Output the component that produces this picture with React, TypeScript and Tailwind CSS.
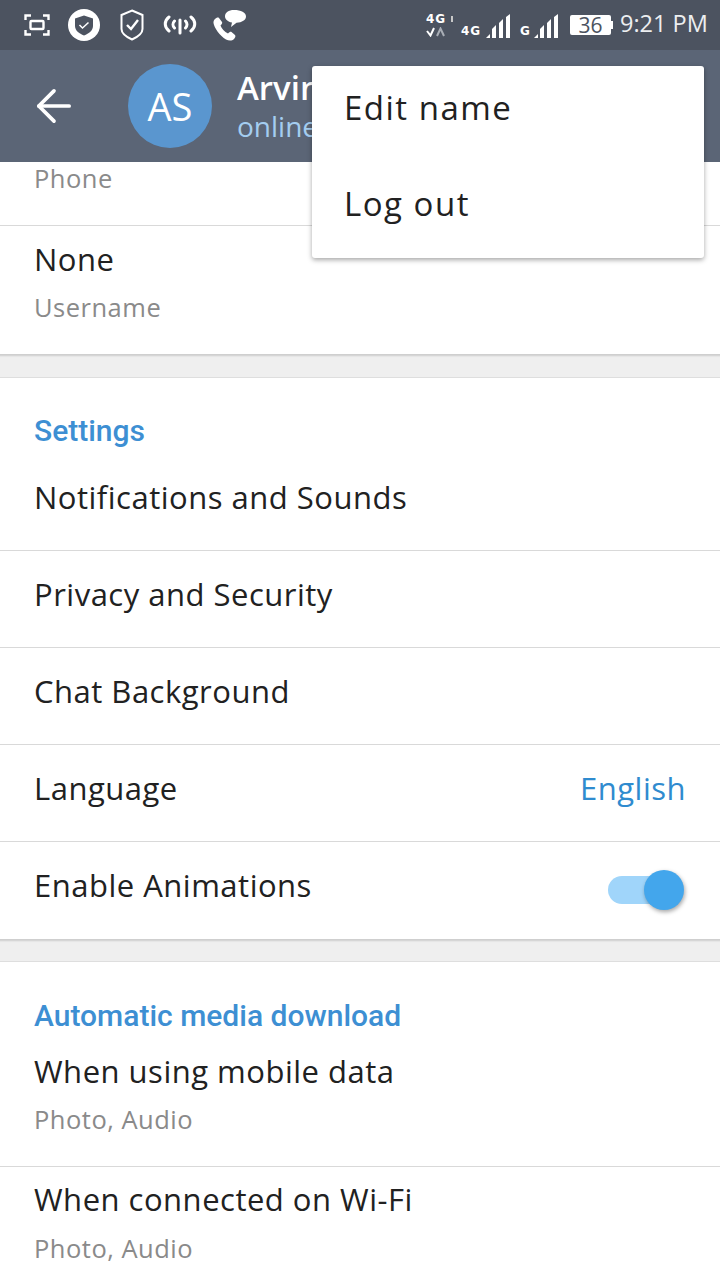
import type { ReactNode } from "react"
import { ArrowLeft } from "lucide-react"

function FocusIcon() {
  return (
    <svg width="26" height="22" viewBox="0 0 26 22" fill="none" stroke="white" strokeWidth="2.4">
      <path d="M1.5 6V1.5H7M19 1.5h5.5V6M24.5 16v4.5H19M7 20.5H1.5V16" />
      <rect x="6.5" y="7" width="13" height="8" rx="1" />
    </svg>
  )
}

function ShieldBadge() {
  return (
    <svg width="32" height="32" viewBox="0 0 32 32">
      <circle cx="16" cy="16" r="16" fill="white" />
      <path d="M16 6.500l9 3v7.500c0 4.500-4 7.500-9 9.500-5-2-9-5-9-9.500V9.500z" fill="#4c5360" />
      <path d="M11.500 16l3 3 6-5.500" fill="none" stroke="white" strokeWidth="1.500" />
    </svg>
  )
}

function ShieldOutline() {
  return (
    <svg width="24" height="32" viewBox="0 0 24 32" fill="none" stroke="white" strokeWidth="2">
      <path d="M12 1.500l10.500 4.500v14c0 4-5 8-10.500 10.500C6.500 28 1.500 24 1.500 20V6z" />
      <path d="M7 16l4 4 7-9" strokeWidth="2.400" />
    </svg>
  )
}

function Antenna() {
  return (
    <svg width="34" height="20" viewBox="0 0 34 20" fill="none" stroke="white" strokeWidth="3" strokeLinecap="round">
      <path d="M6 2c-5 4-5 10 0 14M28 2c5 4 5 10 0 14M11.500 6c-2 2-2 5 0 7M22.500 6c2 2 2 5 0 7M17 5v13" />
    </svg>
  )
}

function CallBubble() {
  return (
    <svg width="33" height="31" viewBox="0 0 33 31" fill="white">
      <path d="M2 9c1-1 3-2 4-1l3 4c.6 1 0 2-1.500 3.500 1 3 4 6.500 7.500 8 1.500-1.500 2.500-2 3.500-1.500l3.500 3c1 1 0 3-1 4-2 2-5 2-8 .5C7 26 1 17.500 .5 13 .3 11.500 1 10 2 9z" />
      <path d="M21 0c7 0 12 2.500 12 6.500 0 3.500-4 6-9.500 6.300L18 17l1-4.600c-4-.7-7-3-7-6C12 2.500 15.500 0 21 0z" />
    </svg>
  )
}

function Bars({ className }: { className: string }) {
  return (
    <svg width="24" height="24" viewBox="0 0 24 24" fill="white" className={className}>
      <path d="M0 24l4-4v4zM6 24v-9l4-4v13zM13 24V9l4-4v19zM20 24V3l4-3v24z" />
    </svg>
  )
}

function DataArrows() {
  return (
    <svg width="19" height="10" viewBox="0 0 19 10" fill="none" strokeWidth="2">
      <path d="M1 4l3.500 4.500L8 1" stroke="white" />
      <path d="M11 9l3.500-7.500L18 9" stroke="#a8adb5" />
    </svg>
  )
}

function Row({ label, right }: { label: string; right?: ReactNode }) {
  return (
    <div className="flex h-[97px] items-start justify-between border-b border-[#d9d9d9] px-[34px] pt-[22px] text-[31px] leading-[42px] tracking-[0.5px] text-[#212121]">
      <span>{label}</span>
      {right}
    </div>
  )
}

export default function App() {
  return (
    <div className="relative h-[1280px] w-[720px] overflow-hidden bg-white font-['Open_Sans',sans-serif]">
      {/* status bar */}
      <div className="flex h-[50px] items-center bg-[#4c5360] pl-6 text-white">
        <FocusIcon />
        <div className="ml-[18px]"><ShieldBadge /></div>
        <div className="ml-5"><ShieldOutline /></div>
        <div className="ml-[19px]"><Antenna /></div>
        <div className="ml-4"><CallBubble /></div>
        <div className="ml-[180px] flex w-[26px] flex-col items-start gap-[2px]">
          <div className="flex items-start gap-[5px]">
            <span className="font-['DejaVu_Sans',sans-serif] text-[12px] font-bold leading-[11px] tracking-[1px]">4G</span>
            <div className="mt-[2px] h-[6px] w-[2px] bg-[#c8c8c8]" />
          </div>
          <DataArrows />
        </div>
        <span className="ml-[9px] mt-[13px] w-[22px] font-['DejaVu_Sans',sans-serif] text-[12px] font-bold leading-[11px] tracking-[1px]">4G</span>
        <Bars className="ml-[3px] mt-[1px]" />
        <span className="ml-[10px] mt-[13px] w-[14px] font-['DejaVu_Sans',sans-serif] text-[12px] font-bold leading-[11px]">G</span>
        <Bars className="mt-[1px]" />
        <div className="ml-3 flex h-5 w-[41px] items-center justify-center rounded-[2px] bg-white text-[21px] leading-5 text-[#4c5360]">36</div>
        <div className="h-[8px] w-[2px] bg-white" />
        <span className="ml-[7px] mb-1 text-[23.5px] leading-8 text-[#eceef0]">9:21 PM</span>
      </div>

      {/* header */}
      <div className="flex h-[112px] items-center bg-[#5b6576] pl-[28px]">
        <ArrowLeft className="h-[52px] w-[52px] text-white" strokeWidth={1.7} />
        <div className="ml-[48px] flex h-[84px] w-[84px] items-center justify-center rounded-full bg-[#5a96cf] text-[38px] text-white">AS</div>
        <div className="ml-[25px] flex flex-col whitespace-nowrap">
          <span className="text-[33px] font-semibold leading-[40px] text-white">Arvind S</span>
          <span className="text-[28px] leading-[36px] text-[#a4cdf0]">online</span>
        </div>
      </div>

      {/* account */}
      <div className="-mt-[1px] border-b border-[#d9d9d9] pb-[30px] pl-[34px] text-[25.500px] leading-[34px] tracking-[0.5px] text-[#8a8a8a]">Phone</div>
      <div className="h-[128px] bg-white pl-[34px] pt-[12px]">
        <div className="text-[31px] leading-[42px] tracking-[0.5px] text-[#212121]">None</div>
        <div className="mt-[10px] text-[25.500px] leading-[34px] tracking-[0.5px] text-[#8a8a8a]">Username</div>
      </div>
      <div className="-mx-1 h-[24px] border-b border-[#dedede] bg-[#efefef] shadow-[inset_0_2px_2px_rgba(0,0,0,0.14)]" />

      {/* settings */}
      <div className="h-[76px] pl-[34px] pt-[33px] font-['Roboto',sans-serif] text-[30px] font-medium leading-[40px] text-[#3d8fd3]">Settings</div>
      <Row label="Notifications and Sounds" />
      <Row label="Privacy and Security" />
      <Row label="Chat Background" />
      <Row label="Language" right={<span className="text-[#2f8bcf]">English</span>} />
      <div className="flex h-[97px] items-start justify-between pl-[34px] pr-9 pt-[22px] text-[31px] leading-[42px] tracking-[0.5px] text-[#212121]">
        <span>Enable Animations</span>
        <div className="relative mt-[12px] h-7 w-[76px]">
          <div className="absolute left-0 top-0 h-7 w-[60px] rounded-full bg-[#a0d5fa]" />
          <div className="absolute -top-[6px] right-0 h-10 w-10 rounded-full bg-[#43a6ec] shadow-[1px_2px_4px_rgba(0,0,0,0.35)]" />
        </div>
      </div>
      <div className="-mx-1 h-[23px] border-b border-[#dedede] bg-[#efefef] shadow-[inset_0_2px_2px_rgba(0,0,0,0.14)]" />

      {/* automatic media download */}
      <div className="h-[77px] pl-[34px] pt-[34px] font-['Roboto',sans-serif] text-[30px] font-medium leading-[40px] text-[#3d8fd3]">Automatic media download</div>
      <div className="h-[128px] border-b border-[#d9d9d9] pl-[34px] pt-[11px]">
        <div className="text-[31px] leading-[42px] tracking-[0.5px] text-[#212121]">When using mobile data</div>
        <div className="mt-[10px] text-[25.500px] leading-[34px] tracking-[0.5px] text-[#8a8a8a]">Photo, Audio</div>
      </div>
      <div className="pl-[34px] pt-[11px]">
        <div className="text-[31px] leading-[42px] tracking-[0.5px] text-[#212121]">When connected on Wi-Fi</div>
        <div className="mt-[11px] text-[25.500px] leading-[34px] tracking-[0.5px] text-[#8a8a8a]">Photo, Audio</div>
      </div>

      {/* overflow menu */}
      <div className="absolute left-[312px] top-[66px] w-[392px] rounded-[3px] bg-white shadow-[0_2px_5px_rgba(0,0,0,0.35)]">
        <div className="flex h-[96px] items-center pb-3 pl-[32px] text-[33px] tracking-[1.500px] text-[#212121]">Edit name</div>
        <div className="flex h-[96px] items-center pb-3 pl-[32px] text-[33px] tracking-[1.500px] text-[#212121]">Log out</div>
      </div>
    </div>
  )
}
